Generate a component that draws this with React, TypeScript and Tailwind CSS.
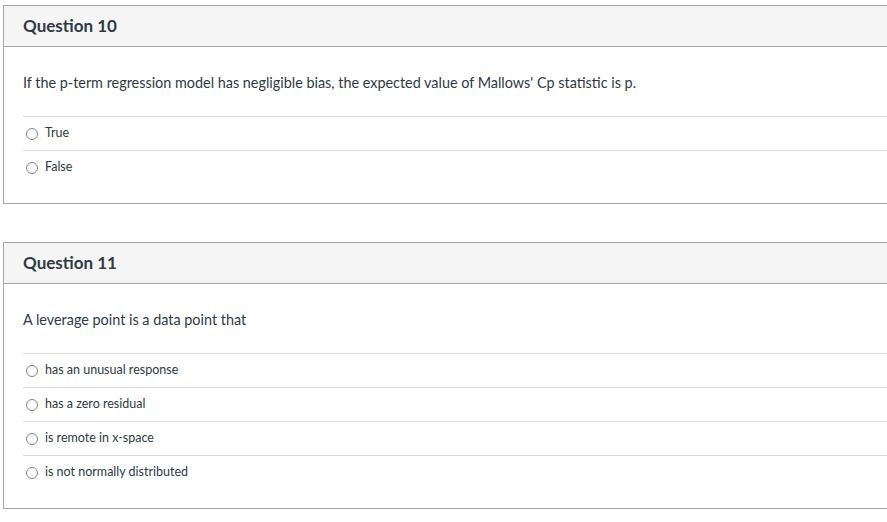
import React from 'react';

interface Question {
  title: string;
  text: string;
  answers: string[];
}

const questions: Question[] = [
  {
    title: 'Question 10',
    text: "If the p-term regression model has negligible bias, the expected value of Mallows' Cp statistic is p.",
    answers: ['True', 'False'],
  },
  {
    title: 'Question 11',
    text: 'A leverage point is a data point that',
    answers: ['has an unusual response', 'has a zero residual', 'is remote in x-space', 'is not normally distributed'],
  },
];

function QuestionCard({ q }: { q: Question }) {
  return (
    <div className="ml-[3px] w-[900px] border border-[#a5a5a5] bg-white">
      {/* header */}
      <div className="flex h-[41px] items-center border-b border-[#a5a5a5] bg-[#f5f5f5] px-[19px]">
        <h2 className="text-[17px] font-bold text-[#2d3b45]">{q.title}</h2>
      </div>

      {/* body */}
      <div className="pl-[19px] pt-[26px] pb-[19px]">
        <p className="mb-[23px] text-[14.4px] leading-[20px] text-[#2d3b45]">{q.text}</p>
        {q.answers.map((a) => (
          <div key={a} className="flex h-[34px] items-center border-t border-[#dcdcdc] pl-[3px]">
            <span className="mr-[7px] h-[12px] w-[12px] rounded-full border border-[#7d868c] bg-white" />
            <span className="text-[12.5px] text-[#2d3b45]">{a}</span>
          </div>
        ))}
      </div>
    </div>
  );
}

export default function App() {
  return (
    <div className="h-[522px] w-[887px] overflow-hidden bg-white pt-[5px] font-['Lato','Liberation_Sans',sans-serif]">
      <div className="flex flex-col gap-[38px]">
        {questions.map((q) => (
          <QuestionCard key={q.title} q={q} />
        ))}
      </div>
    </div>
  );
}
